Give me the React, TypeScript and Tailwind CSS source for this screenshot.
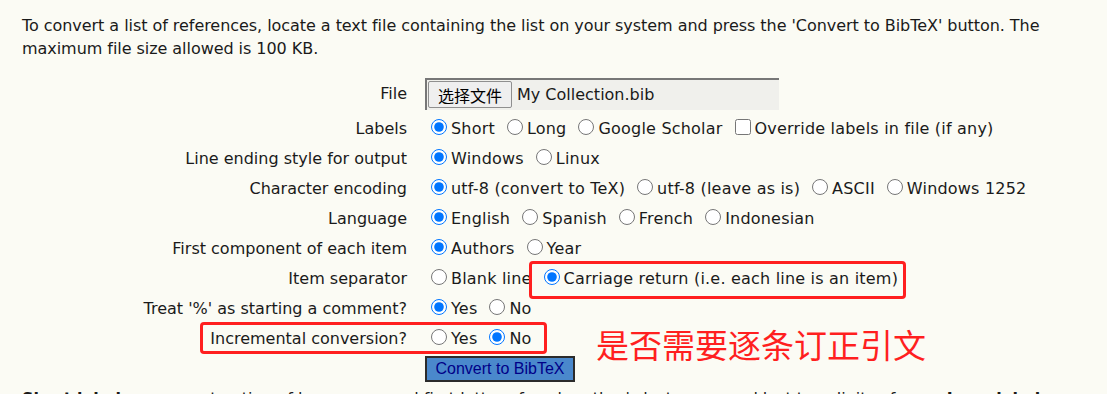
import React from "react";

const font = { fontFamily: "'DejaVu Sans', Verdana, sans-serif" };

type Opt = { label: string; checked?: boolean; box?: boolean };

const ROWS: { label: string; name: string; opts: Opt[] }[] = [
  {
    label: "Labels",
    name: "labels",
    opts: [
      { label: "Short", checked: true },
      { label: "Long" },
      { label: "Google Scholar" },
      { label: "Override labels in file (if any)", box: true },
    ],
  },
  {
    label: "Line ending style for output",
    name: "eol",
    opts: [{ label: "Windows", checked: true }, { label: "Linux" }],
  },
  {
    label: "Character encoding",
    name: "enc",
    opts: [
      { label: "utf-8 (convert to TeX)", checked: true },
      { label: "utf-8 (leave as is)" },
      { label: "ASCII" },
      { label: "Windows 1252" },
    ],
  },
  {
    label: "Language",
    name: "lang",
    opts: [
      { label: "English", checked: true },
      { label: "Spanish" },
      { label: "French" },
      { label: "Indonesian" },
    ],
  },
  {
    label: "First component of each item",
    name: "first",
    opts: [{ label: "Authors", checked: true }, { label: "Year" }],
  },
  {
    label: "Item separator",
    name: "sep",
    opts: [
      { label: "Blank line" },
      { label: "Carriage return (i.e. each line is an item)", checked: true },
    ],
  },
  {
    label: "Treat '%' as starting a comment?",
    name: "comment",
    opts: [{ label: "Yes", checked: true }, { label: "No" }],
  },
  {
    label: "Incremental conversion?",
    name: "incr",
    opts: [{ label: "Yes" }, { label: "No", checked: true }],
  },
];

function Row({ label, children, h = "h-[30px]" }: { label: string; children: React.ReactNode; h?: string }) {
  return (
    <div className={`flex items-center ${h}`}>
      <div className="w-[385px] text-right shrink-0">{label}</div>
      <div className="ml-[18px] flex items-center">{children}</div>
    </div>
  );
}

export default function App() {
  return (
    <div
      className="relative w-[1107px] h-[394px] overflow-hidden bg-[#fbfbf4] text-[#1a1a1a] text-[16px] px-[22px]"
      style={font}
    >
      <p className="mt-[14px] leading-[23px] tracking-[-0.05px]">
        To convert a list of references, locate a text file containing the list on your system and press the 'Convert
        to BibTeX' button. The maximum file size allowed is 100 KB.
      </p>

      <div className="mt-[16px]">
        <Row label="File" h="h-[35px]">
          <div className="flex items-center w-[354px] h-[32px] bg-[#f0f0ec] border-t-2 border-l-2 border-[#777]">
            <button
              className="ml-[1px] h-[27px] w-[84px] bg-[#efefef] border border-[#8f8f8f] rounded-[2px] text-[16px] text-black"
              style={{ fontFamily: "'Noto Sans CJK SC', sans-serif" }}
            >
              选择文件
            </button>
            <span className="ml-[5px]">My Collection.bib</span>
          </div>
        </Row>
        <div className="h-[3px]" />
        {ROWS.map((r) => (
          <Row key={r.name} label={r.label}>
            {r.opts.map((o, i) => (
              <label key={o.label} className={`flex items-center ${i === 0 ? "ml-[6px]" : "ml-[12px]"}`}>
                <input
                  type={o.box ? "checkbox" : "radio"}
                  name={r.name}
                  defaultChecked={o.checked}
                  className="w-[16px] h-[16px] -mt-[4px] mr-[4px] accent-[#0075ff]"
                />
                <span className="tracking-[0.2px]">{o.label}</span>
              </label>
            ))}
          </Row>
        ))}
        <div className="flex items-center h-[30px]">
          <div className="w-[385px] shrink-0" />
          <button
            className="ml-[18px] h-[26px] w-[150px] bg-[#4a88cc] border-2 border-[#2b2b2b] text-[#000088] text-[16px] leading-none"
            style={{ fontFamily: "'Liberation Sans', Arial, sans-serif" }}
          >
            Convert to BibTeX
          </button>
        </div>
        <p className="mt-[3px] whitespace-nowrap leading-[23px]">
          <b>Short labels</b> are a contraction of lower case and first letter of each author's last name and last two
          digits of year; <b>Long labels</b> are constructed
        </p>
      </div>

      {/* annotations */}
      <div className="absolute left-[529px] top-[261px] w-[377px] h-[38px] border-[3px] border-[#ff1f1f] rounded-[4px]" />
      <div className="absolute left-[200px] top-[322px] w-[347px] h-[32px] border-[3px] border-[#ff1f1f] rounded-[4px]" />
      <div
        className="absolute left-[596px] top-[322px] text-[33px] leading-[44px] text-[#ff1f1f]"
        style={{ fontFamily: "'Noto Sans CJK SC', sans-serif" }}
      >
        是否需要逐条订正引文
      </div>
    </div>
  );
}
